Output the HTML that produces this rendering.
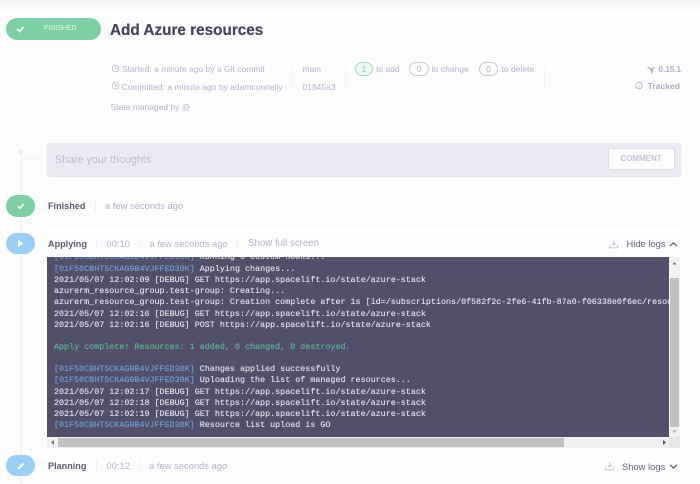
<!DOCTYPE html>
<html lang="en">
<head>
<meta charset="utf-8">
<title>Add Azure resources</title>
<style>
html,body{margin:0;padding:0;background:#fdfdfe;}
#p{position:relative;width:700px;height:484px;overflow:hidden;background:#fdfdfe;font-family:"Liberation Sans",sans-serif;filter:blur(0.35px);}
.t{position:absolute;white-space:nowrap;line-height:12px;font-size:8.5px;color:#b2b4cc;}
.b{position:absolute;}
.d{color:#5a5a72;font-weight:bold;font-size:9.1px;}
.g{color:#b2b4cc;font-size:9.4px;}
.pill{position:absolute;box-sizing:border-box;height:14px;top:62px;border:1px solid #c6c8dc;border-radius:7px;text-align:center;line-height:12px;font-size:8.6px;color:#b2b4cc;background:#fdfdfe;}
svg{position:absolute;overflow:visible;}
#log{position:absolute;left:47px;top:257px;width:622px;height:180px;background:#524f69;overflow:hidden;}
#log div{position:absolute;left:7px;white-space:pre;font-family:"Liberation Mono",monospace;font-size:8.4px;line-height:11px;color:#dedee6;text-shadow:0 0 .4px #dedee6;}
#log b{font-weight:normal;color:#6a9dce;text-shadow:0 0 .4px #6a9dce;}
#log i{font-style:normal;color:#57b28f;text-shadow:0 0 .4px #57b28f;}
</style>
</head>
<body>
<div id="p">
<div class="b" style="left:0;top:0;width:700px;height:12px;background:linear-gradient(#f7f7fa,#fcfcfd);"></div>

<div class="b" style="left:6px;top:18px;width:95px;height:22px;border-radius:11px;background:#7dd0a3;"></div>
<svg style="left:0;top:0" width="30" height="40"><path d="M17 29 L19.5 31.5 L23.5 27" fill="none" stroke="#fff" stroke-width="1.8"/></svg>
<div class="t" style="left:44px;top:23px;font-size:7px;color:#e4f5eb;">FINISHED</div>
<div class="t" style="left:110px;top:22px;line-height:18px;font-size:15.3px;font-weight:bold;color:#46445f;text-shadow:0 0 .4px #46445f;">Add Azure resources</div>

<svg style="left:111px;top:65px" width="9" height="9"><circle cx="4.5" cy="3.5" r="3.4" fill="none" stroke="#b8bad0" stroke-width=".8"/><path d="M4.5 1.5V3.7H6.3" fill="none" stroke="#b8bad0" stroke-width=".8"/></svg>
<div class="t" style="left:122px;top:63px;">Started: a minute ago by a Git commit</div>
<svg style="left:111px;top:82px" width="9" height="9"><circle cx="4.5" cy="3.8" r="3.4" fill="none" stroke="#b8bad0" stroke-width=".8"/><path d="M4.5 2V4H6.2" fill="none" stroke="#b8bad0" stroke-width=".8"/></svg>
<div class="t" style="left:121.5px;top:81px;">Committed: a minute ago by adamconnelly</div>
<div class="t" style="left:110.5px;top:101px;">State managed by @</div>

<div class="b" style="left:292px;top:65px;width:1px;height:26px;background:#f3f3f7;"></div>
<div class="t" style="left:302.5px;top:63px;">main</div>
<div class="t" style="left:302.5px;top:81px;">01845a3</div>
<div class="b" style="left:345px;top:65px;width:1px;height:26px;background:#f3f3f7;"></div>

<div class="pill" style="left:355px;width:18px;border-color:#a5e0bd;background:#e9f7ef;">1</div>
<div class="t" style="left:376px;top:63px;">to add</div>
<div class="pill" style="left:409px;width:20px;">0</div>
<div class="t" style="left:431.5px;top:63px;">to change</div>
<div class="pill" style="left:479px;width:19px;">0</div>
<div class="t" style="left:501.5px;top:63px;">to delete</div>
<div class="b" style="left:544px;top:65px;width:1px;height:26px;background:#f3f3f7;"></div>

<svg style="left:647px;top:66px" width="9" height="9"><path d="M.5 1.2L3.6 3L4.6 7.4L5.6 3L8 1.2L4.6 3.2Z" fill="#a7a9c3" stroke="#a7a9c3" stroke-width=".9"/></svg>
<div class="t" style="left:658.5px;top:64px;font-size:8.1px;font-weight:bold;color:#a9abc5;">0.15.1</div>
<svg style="left:635px;top:81px" width="9" height="9"><circle cx="4" cy="4.5" r="3.3" fill="none" stroke="#a9abc5" stroke-width=".8"/><path d="M4 3V3.6M4 4.3V6.4" stroke="#a9abc5" stroke-width=".8"/></svg>
<div class="t" style="left:647.5px;top:80px;font-size:8.6px;font-weight:bold;color:#a9abc5;">Tracked</div>

<div class="b" style="left:20px;top:150px;width:2px;height:334px;background:#f6f6f9;"></div>
<div class="b" style="left:19px;top:150px;width:4px;height:4px;border-radius:2px;background:#ebebf2;"></div>
<div class="b" style="left:21px;top:158px;width:23px;height:1px;background:#f3f3f7;"></div>

<div class="b" style="left:47px;top:143px;width:634px;height:33px;border-radius:3px;background:#eaeaf2;box-shadow:0 1px 1px #e0e0ea;"></div>
<div class="t" style="left:55px;top:153.5px;font-size:10.7px;color:#bfc1d6;">Share your thoughts</div>
<div class="b" style="left:607.5px;top:148px;width:67px;height:22px;box-sizing:border-box;background:#fdfdfe;border:1px solid #dcdce8;border-radius:2px;text-align:center;font-size:8px;font-weight:bold;line-height:20px;color:#c2c4d8;">COMMENT</div>

<div class="b" style="left:6px;top:195px;width:29px;height:22px;border-radius:11px;background:#7dd0a3;"></div>
<svg style="left:16px;top:202px" width="10" height="8"><path d="M1.5 4.2L3.8 6.2L7.8 2.2" fill="none" stroke="#fff" stroke-width="1.5"/></svg>
<div class="t d" style="left:48px;top:200px;">Finished</div>
<div class="b" style="left:95px;top:200px;width:1px;height:12px;background:#f0f0f5;"></div>
<div class="t g" style="left:105px;top:200px;">a few seconds ago</div>
<div class="b" style="left:47px;top:225px;width:634px;height:1px;background:#f4f4f8;"></div>

<div class="b" style="left:6px;top:233px;width:29px;height:21px;border-radius:11px;background:#99cff6;"></div>
<svg style="left:17px;top:239px" width="8" height="9"><path d="M1 .8L6.4 4.5L1 8.2Z" fill="#fff"/></svg>
<div class="t d" style="left:48px;top:238px;">Applying</div>
<div class="b" style="left:96px;top:237px;width:1px;height:13px;background:#f0f0f5;"></div>
<div class="t g" style="left:106.5px;top:238px;">00:10</div>
<div class="b" style="left:139px;top:237px;width:1px;height:13px;background:#f0f0f5;"></div>
<div class="t g" style="left:149.5px;top:238px;">a few seconds ago</div>
<div class="b" style="left:237px;top:237px;width:1px;height:13px;background:#f0f0f5;"></div>
<div class="t g" style="left:248px;top:238px;font-size:9.7px;">Show full screen</div>

<svg style="left:609px;top:239px" width="10" height="10"><path d="M.7 5.5V8.8H8.8V5.5M4.8 .8V6M2.8 4L4.8 6L6.8 4" fill="none" stroke="#b8bad0" stroke-width=".8"/></svg>
<div class="t" style="left:626.5px;top:238px;font-size:9.4px;color:#66667e;">Hide logs</div>
<svg style="left:669px;top:241px" width="9" height="7"><path d="M1 5L4.5 1.8L8 5" fill="none" stroke="#5a5a72" stroke-width="1.2"/></svg>

<div id="log">
<div style="top:-5px"><b>[01F50CBHT5CKAG9B4VJFFED30K]</b> Running 0 custom hooks...</div>
<div style="top:7px"><b>[01F50CBHT5CKAG9B4VJFFED30K]</b> Applying changes...</div>
<div style="top:18.2px">2021/05/07 12:02:09 [DEBUG] GET https://app.spacelift.io/state/azure-stack</div>
<div style="top:29.3px">azurerm_resource_group.test-group: Creating...</div>
<div style="top:40.4px">azurerm_resource_group.test-group: Creation complete after 1s [id=/subscriptions/0f582f2c-2fe6-41fb-87a0-f06338e0f6ec/resourceGroups</div>
<div style="top:51.6px">2021/05/07 12:02:16 [DEBUG] GET https://app.spacelift.io/state/azure-stack</div>
<div style="top:62.7px">2021/05/07 12:02:16 [DEBUG] POST https://app.spacelift.io/state/azure-stack</div>
<div style="top:85px"><i>Apply complete! Resources: 1 added, 0 changed, 0 destroyed.</i></div>
<div style="top:107.3px"><b>[01F50CBHT5CKAG9B4VJFFED30K]</b> Changes applied successfully</div>
<div style="top:118.4px"><b>[01F50CBHT5CKAG9B4VJFFED30K]</b> Uploading the list of managed resources...</div>
<div style="top:129.6px">2021/05/07 12:02:17 [DEBUG] GET https://app.spacelift.io/state/azure-stack</div>
<div style="top:140.7px">2021/05/07 12:02:18 [DEBUG] GET https://app.spacelift.io/state/azure-stack</div>
<div style="top:151.8px">2021/05/07 12:02:19 [DEBUG] GET https://app.spacelift.io/state/azure-stack</div>
<div style="top:163px"><b>[01F50CBHT5CKAG9B4VJFFED30K]</b> Resource list upload is GO</div>
</div>

<div class="b" style="left:669px;top:257px;width:11px;height:180px;background:#f1f1f1;"></div>
<div class="b" style="left:670px;top:278px;width:9px;height:149px;background:#c1c1c1;"></div>
<svg style="left:671px;top:261px" width="8" height="5"><path d="M3.5 1L5.5 3.5H1.5Z" fill="#777"/></svg>
<svg style="left:671px;top:429px" width="8" height="5"><path d="M3.5 4L5.5 1.5H1.5Z" fill="#aaa"/></svg>
<div class="b" style="left:47px;top:437px;width:622px;height:11px;background:#f1f1f1;"></div>
<div class="b" style="left:58px;top:438px;width:506px;height:9px;background:#c1c1c1;"></div>
<svg style="left:50px;top:439px" width="6" height="8"><path d="M1 3.5L4 1V6Z" fill="#777"/></svg>
<svg style="left:661px;top:439px" width="6" height="8"><path d="M5 3.5L2 1V6Z" fill="#555"/></svg>
<div class="b" style="left:669px;top:437px;width:11px;height:11px;background:#e6e6e6;"></div>

<div class="b" style="left:6px;top:455px;width:29px;height:21px;border-radius:11px;background:#99cff6;"></div>
<svg style="left:16px;top:461px" width="10" height="10"><path d="M1.6 8.4L2 6.4L6.6 1.8L8.2 3.4L3.6 8Z" fill="#fff"/></svg>
<div class="t d" style="left:48px;top:460px;">Planning</div>
<div class="b" style="left:96px;top:460px;width:1px;height:12px;background:#f0f0f5;"></div>
<div class="t g" style="left:106.5px;top:460px;">00:12</div>
<div class="b" style="left:139px;top:460px;width:1px;height:12px;background:#f0f0f5;"></div>
<div class="t g" style="left:149px;top:460px;">a few seconds ago</div>

<svg style="left:605px;top:461px" width="10" height="10"><path d="M.7 5.5V8.8H8.8V5.5M4.8 .8V6M2.8 4L4.8 6L6.8 4" fill="none" stroke="#b8bad0" stroke-width=".8"/></svg>
<div class="t" style="left:622px;top:461px;font-size:9.4px;color:#66667e;">Show logs</div>
<svg style="left:669px;top:463px" width="9" height="7"><path d="M1 1.8L4.5 5L8 1.8" fill="none" stroke="#5a5a72" stroke-width="1.2"/></svg>
</div>
</body>
</html>
